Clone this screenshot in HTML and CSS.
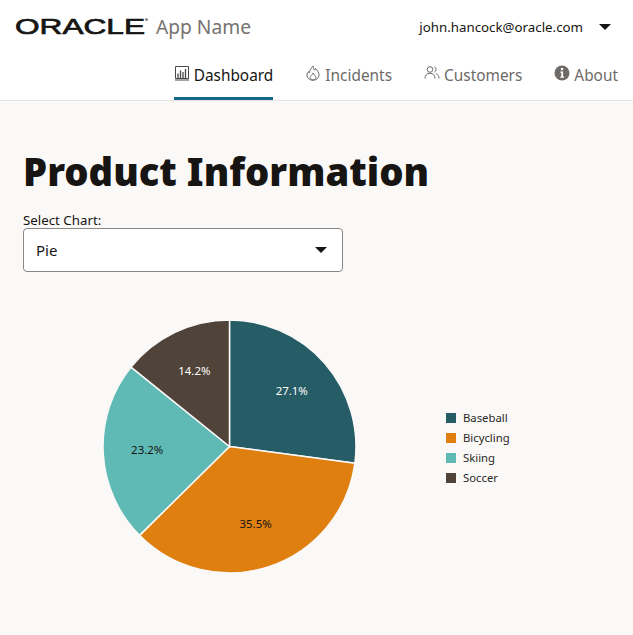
FILE: index.html
```html
<!DOCTYPE html>
<html lang="en">
<head>
<meta charset="utf-8">
<title>Product Information</title>
<link rel="stylesheet" href="styles.css">
</head>
<body>
<header class="app-header">
  <div class="top-row">
    <div class="brand">
      <div class="logo">
        <span class="logo-word">ORACLE</span>
        <span class="logo-mark"></span>
      </div>
      <span class="app-name">App Name</span>
    </div>
    <div class="user">
      <span class="user-name">john.hancock@oracle.com</span>
      <span class="caret"></span>
    </div>
  </div>
  <nav class="tabs">
    <a class="tab tab-active">
      <svg class="tab-icon" viewBox="0 0 16 16"><path d="M1.500 1.500h13v12h-13z M1 15h14" fill="none" stroke="currentColor"/><path d="M4 13V8.500M6.500 13V5.500M9 13V7M11.500 13V4" fill="none" stroke="currentColor" stroke-width="1.300"/></svg>
      <span>Dashboard</span>
    </a>
    <a class="tab">
      <svg class="tab-icon" viewBox="0 0 16 16"><path d="M8 1c1 2 .5 3.200 1.500 4.300C10.200 4.800 10.500 4 10.500 3.500c2 1.800 3.500 4.200 3.500 6.500 0 3-2.600 5.200-6 5.200S2 13 2 10c0-1.500.8-2.700 1.700-3.500.1.700.4 1.200.9 1.500C4.500 5.500 6 3 8 1z" fill="none" stroke="currentColor"/><path d="M8 15c-1.800 0-2.900-1.100-2.900-2.500 0-1.500 2-2.300 2.900-4.500 1 2 2.900 3 2.900 4.500C10.900 13.900 9.800 15 8 15z" fill="none" stroke="currentColor"/></svg>
      <span>Incidents</span>
    </a>
    <a class="tab">
      <svg class="tab-icon" viewBox="0 0 16 16"><circle cx="6" cy="4.500" r="2.800" fill="none" stroke="currentColor"/><path d="M1 13.500c0-3.500 2-5.200 5-5.200s5 1.700 5 5.200M10.300 1.900a2.800 2.800 0 0 1 0 5.200M12 8.700c1.900.7 3 2.300 3 4.800" fill="none" stroke="currentColor"/></svg>
      <span>Customers</span>
    </a>
    <a class="tab">
      <svg class="tab-icon" viewBox="0 0 16 16"><circle cx="8" cy="8" r="7.500" fill="currentColor"/><rect class="info-mark" x="6.900" y="3" width="2.200" height="2.200"/><path class="info-mark" d="M6.300 6.500h2.800v5h1v1.200H6.300v-1.200h1v-3.800h-1z"/></svg>
      <span>About</span>
    </a>
  </nav>
</header>
<main class="page">
  <h1 class="title">Product Information</h1>
  <label class="field-label">Select Chart:</label>
  <div class="select">
    <span>Pie</span>
    <span class="caret"></span>
  </div>
  <section class="chart">
    <svg class="pie" width="261" height="261" viewBox="-130 -130 260 260">
      <path class="slice s-baseball" d="M0 0V-126A126 126 0 0 1 124.900 16.590Z"/>
      <path class="slice s-bicycling" d="M0 0L124.900 16.590A126 126 0 0 1 -89.650 88.530Z"/>
      <path class="slice s-skiing" d="M0 0L-89.650 88.530A126 126 0 0 1 -98.060 -79.120Z"/>
      <path class="slice s-soccer" d="M0 0L-98.060 -79.120A126 126 0 0 1 0 -126Z"/>
      <text class="pie-label light" x="62" y="-51">27.1%</text>
      <text class="pie-label dark" x="26" y="81">35.5%</text>
      <text class="pie-label dark" x="-82" y="7">23.2%</text>
      <text class="pie-label light" x="-35" y="-71">14.2%</text>
    </svg>
    <ul class="legend">
      <li class="legend-item"><span class="swatch s-baseball"></span>Baseball</li>
      <li class="legend-item"><span class="swatch s-bicycling"></span>Bicycling</li>
      <li class="legend-item"><span class="swatch s-skiing"></span>Skiing</li>
      <li class="legend-item"><span class="swatch s-soccer"></span>Soccer</li>
    </ul>
  </section>
</main>
</body>
</html>
```

FILE: styles.css
```css
* { box-sizing: border-box; }
html, body { height: 100%; }
body {
  margin: 0;
  overflow: hidden;
  background: #fbf9f8;
  color: #161513;
  font-family: "Noto Sans", "Open Sans", sans-serif;
}
.app-header {
  height: 101px;
  background: #fff;
  border-bottom: 1px solid #e6e4e2;
  display: flex;
  flex-direction: column;
}
.top-row {
  display: flex;
  justify-content: space-between;
  align-items: center;
  height: 53px;
  padding: 0 22px 0 15px;
}
.brand { display: flex; align-items: center; gap: 3px; }
.logo {
  display: flex;
  width: 138px;
  height: 24px;
  align-items: center;
}
.logo-word {
  display: inline-block;
  font-family: "Liberation Sans", sans-serif;
  font-size: 22.500px;
  font-weight: 400;
  line-height: 24px;
  color: #161513;
  -webkit-text-stroke: 0.700px #161513;
  transform: scaleX(1.405);
  transform-origin: left center;
}
.logo-mark {
  width: 3px;
  height: 3px;
  margin: -14px 0 0 37px;
  border-radius: 50%;
  background: #8a8785;
}
.app-name { font-size: 19.200px; color: #75726f; }
.user { display: flex; align-items: center; gap: 16px; }
.user-name { font-size: 13.300px; color: #161513; }
.caret {
  width: 0;
  height: 0;
  border-left: 6px solid transparent;
  border-right: 6px solid transparent;
  border-top: 6px solid #161513;
}
.tabs {
  display: flex;
  justify-content: flex-end;
  gap: 32px;
  padding-right: 15px;
  height: 47px;
}
.tab {
  display: flex;
  align-items: flex-start;
  gap: 4px;
  padding-top: 12px;
  font-size: 15.400px;
  line-height: 22px;
  color: #6d6a67;
}
.tab-active {
  color: #161513;
  border-bottom: 3px solid #14688a;
}
.tab-icon { width: 16px; height: 16px; flex: none; }
.tab-active .tab-icon { color: #4a4846; }
.info-mark { fill: #fff; }
.page { padding: 47px 23px 0; }
.title {
  margin: 0;
  font-size: 38.200px;
  line-height: 46px;
  font-weight: 900;
  color: #161513;
}
.field-label {
  display: block;
  margin-top: 18px;
  font-size: 13.300px;
  line-height: 16px;
}
.select {
  display: flex;
  justify-content: space-between;
  align-items: center;
  width: 320px;
  height: 44px;
  padding: 0 15px 0 12px;
  background: #fff;
  border: 1px solid #8a8785;
  border-radius: 4px;
  font-size: 15px;
}
.chart {
  display: flex;
  align-items: center;
  margin-top: 44px;
  padding-left: 76px;
}
.pie { display: block; flex: none; }
.slice { stroke: #fbf9f8; stroke-width: 1.500; }
.s-baseball { fill: #255c65; background: #255c65; }
.s-bicycling { fill: #df7f10; background: #df7f10; }
.s-skiing { fill: #5fb9b5; background: #5fb9b5; }
.s-soccer { fill: #4f433a; background: #4f433a; }
.pie-label { font-size: 11.400px; text-anchor: middle; }
.light { fill: #fff; }
.dark { fill: #161513; }
.legend {
  list-style: none;
  margin: 2px 0 0 86px;
  padding: 0;
  display: flex;
  flex-direction: column;
  gap: 4px;
}
.legend-item {
  display: flex;
  align-items: center;
  gap: 7px;
  font-size: 11.300px;
  line-height: 16px;
  color: #2a2826;
}
.swatch { width: 10px; height: 10px; flex: none; }
```
